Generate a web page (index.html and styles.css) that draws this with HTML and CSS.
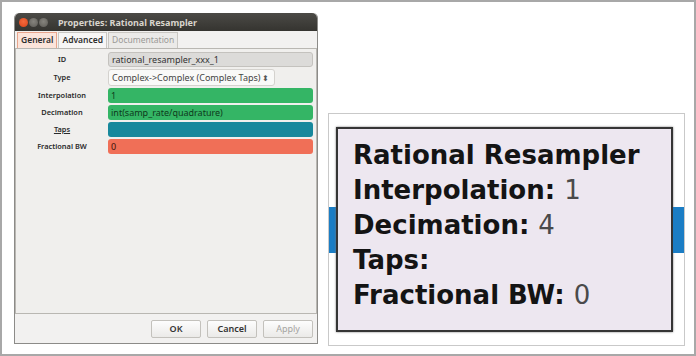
FILE: index.html
```html
<!DOCTYPE html>
<html lang="en">
<head>
    <meta charset="UTF-8">
    <title>Rational Resampler</title>
    <link rel="stylesheet" href="styles.css">
</head>
<body>
    <div class="frame">
        <div class="dialog">
            <div class="titlebar">
                <span class="wbtn close"></span>
                <span class="wbtn"></span>
                <span class="wbtn"></span>
                <span class="title">Properties: Rational Resampler</span>
            </div>
            <div class="tabs">
                <span class="tab active">General</span>
                <span class="tab">Advanced</span>
                <span class="tab off">Documentation</span>
            </div>
            <div class="pane">
                <div class="rows">
                    <label>ID</label>
                    <div class="field id">rational_resampler_xxx_1</div>
                    <label>Type</label>
                    <div class="cell"><div class="field combo">Complex-&gt;Complex (Complex Taps)<span class="spin">&#x2B0D;</span></div></div>
                    <label>Interpolation</label>
                    <div class="field green">1</div>
                    <label>Decimation</label>
                    <div class="field green">int(samp_rate/quadrature)</div>
                    <label class="ul">Taps</label>
                    <div class="field teal"></div>
                    <label>Fractional BW</label>
                    <div class="field salmon">0</div>
                </div>
            </div>
            <div class="buttons">
                <button>OK</button>
                <button>Cancel</button>
                <button class="dis">Apply</button>
            </div>
        </div>

        <div class="canvas">
            <div class="port left"></div>
            <div class="block">
                <div class="bname">Rational Resampler</div>
                <div>Interpolation: <span class="val">1</span></div>
                <div>Decimation: <span class="val">4</span></div>
                <div>Taps:</div>
                <div>Fractional BW: <span class="val">0</span></div>
            </div>
            <div class="port right"></div>
        </div>
    </div>
</body>
</html>
```

FILE: styles.css
```css
body {
    margin: 0;
    background: #fff;
    font-family: "Noto Sans", "DejaVu Sans", sans-serif;
}
.frame {
    box-sizing: border-box;
    width: 696px;
    height: 356px;
    border: 2px solid #a8a8a8;
    background: #fff;
    display: flex;
    align-items: flex-start;
    padding: 11px 0 0 12px;
}

/* properties dialog */
.dialog {
    box-sizing: border-box;
    width: 304px;
    height: 331px;
    background: #f2f1f0;
    border: 1px solid #8c8b88;
    border-top: none;
    border-radius: 5px 5px 0 0;
    display: flex;
    flex-direction: column;
}
.titlebar {
    height: 18px;
    background: linear-gradient(#4b4a46, #353430);
    border-radius: 5px 5px 0 0;
    display: flex;
    align-items: center;
    padding-left: 4px;
    gap: 1px;
}
.wbtn {
    width: 9px;
    height: 9px;
    border-radius: 50%;
    background: radial-gradient(circle at 50% 40%, #86847e, #5d5b56);
}
.wbtn.close {
    background: radial-gradient(circle at 50% 40%, #f46a3d, #d9431a);
}
.title {
    margin-left: 9px;
    color: #d8d4cc;
    font-size: 9px;
    font-weight: 700;
}
.tabs {
    height: 17px;
    display: flex;
    align-items: flex-end;
    padding-left: 2px;
    gap: 1px;
}
.tab {
    font-size: 8.5px;
    font-weight: 600;
    color: #2e2e2e;
    padding: 1px 3px 2px;
    border: 1px solid #c9c7c2;
    border-bottom: none;
    background: #f7f6f5;
    line-height: 12px;
}
.tab.active {
    background: #fbe4da;
    border-color: #e8a58c;
}
.tab.off {
    color: #9a9996;
    font-weight: 400;
    background: #ebeae8;
}
.pane {
    flex: 1;
    border: 1px solid #b9b7b2;
    background: #f0efed;
    padding-top: 2px;
}
.rows {
    display: grid;
    grid-template-columns: 92px 205px;
    grid-template-rows: 16px 18px 16px 16px 16px 16px;
    row-gap: 1px;
}
.rows label {
    font-size: 7.4px;
    font-weight: 600;
    color: #2a2a2a;
    text-align: center;
    align-self: center;
}
.rows label.ul {
    text-decoration: underline;
}
.field {
    box-sizing: border-box;
    font-size: 9px;
    color: #222;
    padding-left: 3px;
    border-radius: 3px;
    display: flex;
    align-items: center;
    height: 15px;
    align-self: center;
}
.field.id {
    background: #dcdbd9;
    border: 1px solid #c4c2be;
    color: #333;
}
.cell {
    display: flex;
    align-items: center;
}
.field.combo {
    width: 167px;
    height: 17px;
    background: #f9f9f8;
    border: 1px solid #d4d2ce;
    color: #444;
    justify-content: space-between;
    padding-right: 5px;
}
.spin {
    font-size: 8px;
    color: #555;
}
.field.green {
    background: #34b565;
    color: #0e3a1c;
}
.field.teal {
    background: #17889c;
}
.field.salmon {
    background: #f06f57;
    color: #3a1208;
}
.buttons {
    height: 29px;
    display: flex;
    align-items: center;
    justify-content: flex-end;
    gap: 6px;
    padding-right: 4px;
}
button {
    width: 50px;
    height: 18px;
    font-family: inherit;
    font-size: 9px;
    font-weight: 600;
    color: #333;
    background: linear-gradient(#fdfdfd, #ebeae8);
    border: 1px solid #c3c1bc;
    border-radius: 2px;
    padding: 0;
}
button.dis {
    color: #a5a4a1;
    font-weight: 400;
}

/* flowgraph block */
.canvas {
    box-sizing: border-box;
    width: 357px;
    height: 233px;
    margin: 100px 0 0 10px;
    border: 1px solid #c9c9c9;
    display: flex;
    align-items: center;
}
.port {
    height: 46px;
    background: #1b7dc4;
}
.port.left {
    width: 7px;
}
.port.right {
    width: 11px;
}
.block {
    box-sizing: border-box;
    width: 337px;
    height: 205px;
    background: #ede7f0;
    border: 2px solid #353535;
    box-shadow: 0 0 2px #777;
    padding: 9px 0 0 15px;
    font-family: "DejaVu Sans", sans-serif;
    font-size: 26px;
    font-weight: 700;
    line-height: 35px;
    color: #141414;
}
.block .val {
    font-weight: 400;
    color: #4a4a4a;
}
```
